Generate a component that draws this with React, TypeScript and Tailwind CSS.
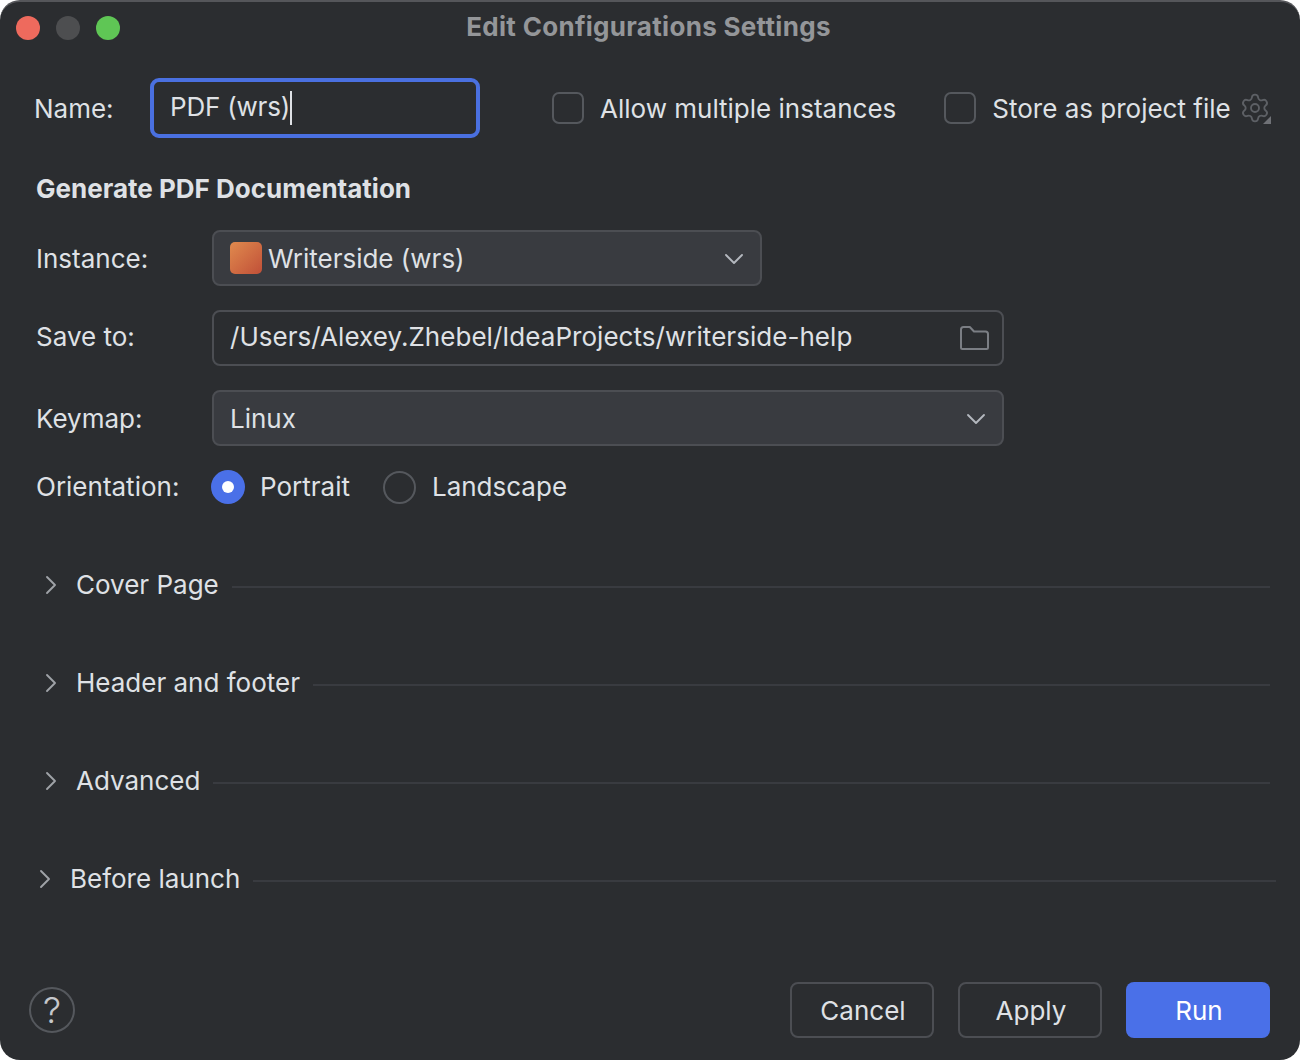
import React from 'react';
import { ChevronDown, ChevronRight, Settings } from 'lucide-react';

const Gear = () => (
  <div className="relative w-8 h-8 ml-2 shrink-0">
    <Settings size={32} strokeWidth={1.4} className="text-[#5d6065]" />
    <svg width="8" height="8" viewBox="0 0 8 8" className="absolute right-0 bottom-0">
      <path d="M8 0v8H0z" fill="#6f7176" />
    </svg>
  </div>
);

const Folder = () => (
  <svg width="30" height="26" viewBox="0 0 30 26" fill="none">
    <path
      d="M2 4.500A2.500 2.500 0 0 1 4.500 2h6.300l4.200 4.500h11.500A2.500 2.500 0 0 1 29 9v13.500a1.500 1.500 0 0 1-1.500 1.500h-24A1.500 1.500 0 0 1 2 22.500z"
      stroke="#7b7e84"
      strokeWidth="2"
      strokeLinejoin="round"
    />
  </svg>
);

const Field = ({ label, labelClass, children }: { label: string; labelClass?: string; children: React.ReactNode }) => (
  <div className="flex items-center">
    <span className={`w-[176px] shrink-0 ${labelClass ?? ''}`}>{label}</span>
    {children}
  </div>
);

const Checkbox = ({ label }: { label: string }) => (
  <label className="flex items-center">
    <span className="w-8 h-8 rounded-[7px] border-2 border-[#55585d] mr-4" />
    <span className="mt-[2px]">{label}</span>
  </label>
);

const Section = ({ title, last }: { title: string; last?: boolean }) => (
  <div className={`flex items-center h-[34px] ${last ? 'ml-[-6px] mr-[-6px]' : ''}`}>
    <ChevronRight size={32} strokeWidth={1.4} className="text-[#a0a3a8] ml-[-1px] mr-[9px] shrink-0" />
    <span className="mr-[13px] whitespace-nowrap">{title}</span>
    <span className="flex-1 h-[2px] mt-[3px] bg-[#393b40]" />
  </div>
);

const Button = ({ label, primary }: { label: string; primary?: boolean }) => (
  <button
    className={
      primary
        ? 'w-36 h-14 pt-[2px] pl-[2px] rounded-lg bg-[#4a70e8] text-white'
        : 'w-36 h-14 pt-[2px] pl-[2px] rounded-lg border-2 border-[#4c4e53] text-[#dfe1e5]'
    }
  >
    {label}
  </button>
);

export default function App() {
  return (
    <div className="w-[1300px] h-[1060px] bg-white overflow-hidden" style={{ fontFamily: 'Inter, sans-serif' }}>
      <div className="h-full rounded-[20px] bg-[#2b2d30] border-t-2 border-[#55565a] flex flex-col text-[26px] leading-[34px] text-[#dfe1e5]">
        <div className="relative h-[52px] shrink-0 flex items-center gap-4 pl-4">
          <span className="w-6 h-6 rounded-full bg-[#ee6a5d]" />
          <span className="w-6 h-6 rounded-full bg-[#4d4e50]" />
          <span className="w-6 h-6 rounded-full bg-[#5fc655]" />
          <span className="absolute left-0 right-[3px] top-[8px] text-center font-bold tracking-[0.3px] text-[#949699]">
            Edit Configurations Settings
          </span>
        </div>

        <div className="flex items-center h-[60px] mt-6 pl-[34px]">
          <span className="w-[116px] shrink-0 mt-[2px]">Name:</span>
          <div className="w-[330px] h-[60px] rounded-[9px] border-4 border-[#4a70e0] flex items-center pl-4 mr-[72px]">
            <span className="mt-[-3px] tracking-[-0.2px]">PDF (wrs)</span>
            <span className="w-[1.5px] h-[34px] bg-[#dfe1e5]" />
          </div>
          <Checkbox label="Allow multiple instances" />
          <div className="w-[48px]" />
          <Checkbox label="Store as project file" />
          <Gear />
        </div>

        <div className="font-bold mt-[34px] pl-9">Generate PDF Documentation</div>

        <div className="flex flex-col pl-9 mt-6">
          <Field label="Instance:" labelClass="mt-[2px]">
            <div className="w-[550px] h-14 rounded-lg border-2 border-[#4c4e53] bg-[#393b40] flex items-center pl-4 pr-[10px]">
              <span className="w-8 h-8 rounded-[5px] bg-gradient-to-br from-[#e08a4e] to-[#c04f38] mr-1.5" />
              <span className="flex-1 mt-[2px]">Writerside (wrs)</span>
              <ChevronDown size={32} strokeWidth={1.4} className="text-[#b4b8bf] mt-[2px]" />
            </div>
          </Field>
          <div className="mt-6">
            <Field label="Save to:" labelClass="mb-[2px]">
              <div className="w-[792px] h-14 rounded-lg border-2 border-[#4c4e53] flex items-center pl-4 pr-[13px]">
                <span className="flex-1 mb-[2px] tracking-[0.04px]">/Users/Alexey.Zhebel/IdeaProjects/writerside-help</span>
                <Folder />
              </div>
            </Field>
          </div>
          <div className="mt-6">
            <Field label="Keymap:" labelClass="mt-[2px]">
              <div className="w-[792px] h-14 rounded-lg border-2 border-[#4c4e53] bg-[#393b40] flex items-center pl-4 pr-[10px]">
                <span className="flex-1 mt-[2px]">Linux</span>
                <ChevronDown size={32} strokeWidth={1.4} className="text-[#b4b8bf] mt-[2px]" />
              </div>
            </Field>
          </div>
          <div className="mt-6">
            <Field label="Orientation:">
              <span className="w-[34px] h-[34px] rounded-full bg-[#4a70e8] flex items-center justify-center mr-[15px] ml-[-1px]">
                <span className="w-3 h-3 rounded-full bg-white" />
              </span>
              <span className="mr-[33px]">Portrait</span>
              <span className="w-[33px] h-[33px] rounded-full border-2 border-[#55585d] mr-4" />
              <span>Landscape</span>
            </Field>
          </div>
        </div>

        <div className="flex flex-col gap-16 pl-9 pr-[30px] mt-[64px]">
          <Section title="Cover Page" />
          <Section title="Header and footer" />
          <Section title="Advanced" />
          <Section title="Before launch" last />
        </div>

        <div className="mt-auto mb-[22px] flex items-center pl-[29px] pr-[30px]">
          <span className="w-[46px] h-[46px] rounded-full border-2 border-[#55585d] flex items-center justify-center text-[36px] font-light text-[#c5c7cb]">
            ?
          </span>
          <div className="ml-auto flex gap-6">
            <Button label="Cancel" />
            <Button label="Apply" />
            <Button label="Run" primary />
          </div>
        </div>
      </div>
    </div>
  );
}
